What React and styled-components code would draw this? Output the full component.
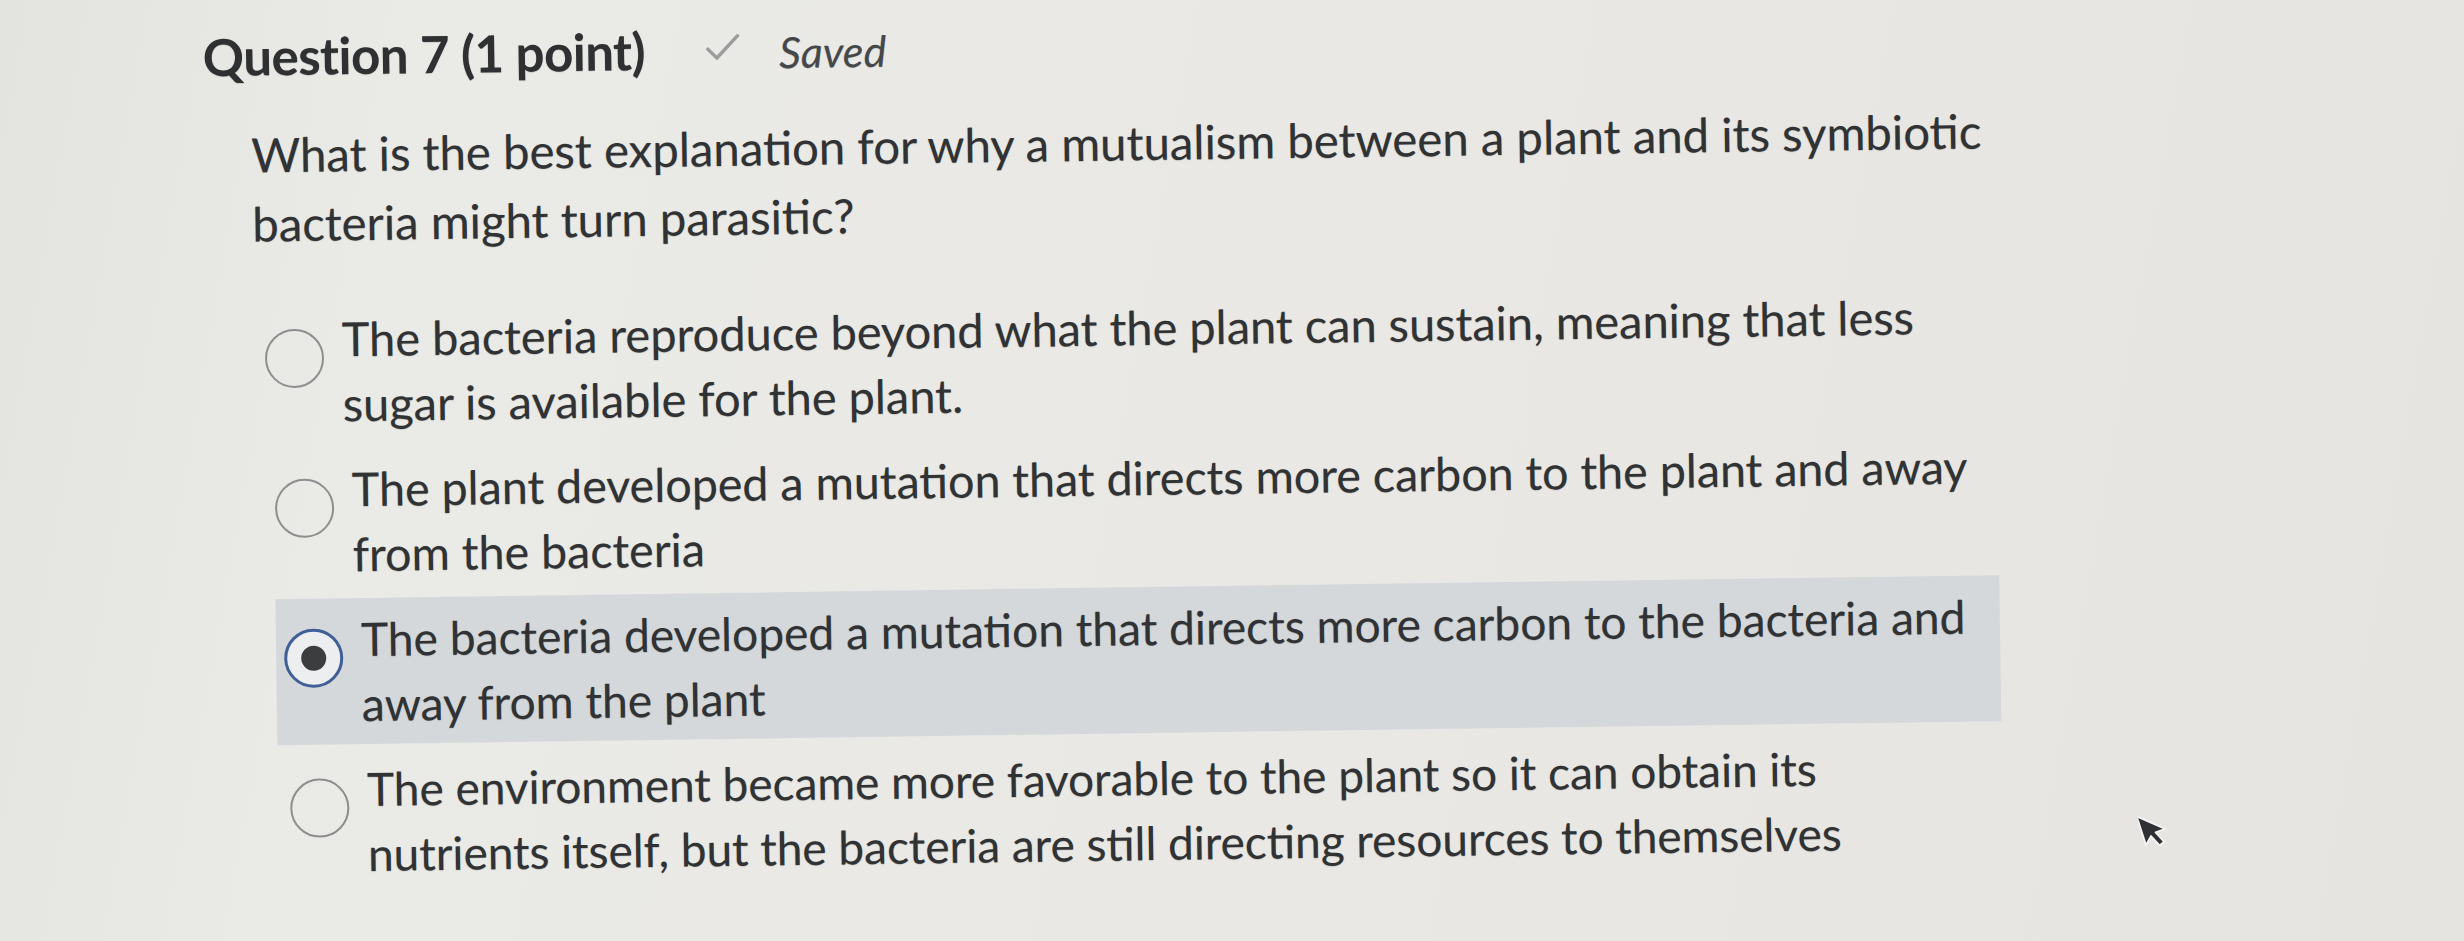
import React from "react";
import styled, { createGlobalStyle } from "styled-components";

const GlobalStyle = createGlobalStyle`
  html, body {
    margin: 0;
    padding: 0;
    background: #e6e5e1;
  }
  body {
    font-family: Lato, "Open Sans", "Liberation Sans", sans-serif;
    color: #313335;
  }
  * { box-sizing: border-box; }
`;

const Page = styled.main`
  position: relative;
  width: 2464px;
  height: 941px;
  overflow: hidden;
  background: linear-gradient(100deg, #e3e3e0 0%, #eaeae7 16%, #e9e8e4 55%, #e5e4e0 100%);
`;

const Sheet = styled.div`
  display: flex;
  flex-direction: column;
  padding: 29px 0 0 202px;
  transform: rotate(-0.8deg);
  transform-origin: 0 0;
`;

const Header = styled.header`
  display: flex;
  align-items: baseline;
`;

const Title = styled.h2`
  margin: 0;
  font-family: Lato, "Liberation Sans", sans-serif;
  font-weight: 700;
  font-size: 51px;
  line-height: 62px;
  color: #2f3032;
  letter-spacing: -0.5px;
  text-shadow: 0 0.5px 1px rgba(0, 0, 0, 0.25);
`;

const SavedStatus = styled.span`
  display: inline-flex;
  align-items: baseline;
  margin-left: 60px;
  gap: 38px;
  font-style: italic;
  font-size: 43px;
  line-height: 62px;
  color: #45484b;
  text-shadow: 0 0.5px 1px rgba(0, 0, 0, 0.2);
`;

const CheckMark = styled.svg`
  width: 36px;
  height: 30px;
  align-self: center;
  position: relative;
  top: -6px;
`;

const Prompt = styled.p`
  margin: 29px 0 0 47px;
  font-size: 47.3px;
  line-height: 69px;
  white-space: nowrap;
  color: #303234;
  text-shadow: 0 0.5px 1px rgba(0, 0, 0, 0.28);
`;

const OptionList = styled.div`
  display: flex;
  flex-direction: column;
  gap: 4px;
  margin: 42px 0 0 50px;
`;

const Row = styled.label`
  display: flex;
  align-items: flex-start;
  gap: 18px;
  width: 1724px;
  padding: 8px 8px;
  margin-left: ${(p) => p.$indent}px;
  background: ${(p) => (p.$selected ? "#d4d8db" : "transparent")};
  cursor: pointer;
`;

const Radio = styled.span`
  flex: none;
  display: flex;
  align-items: center;
  justify-content: center;
  width: 59px;
  height: 59px;
  margin-top: 22px;
  border-radius: 50%;
  border: ${(p) => (p.$checked ? "3px solid #3f5f96" : "2px solid #8d8e8f")};
  background: ${(p) => (p.$checked ? "#eceeef" : "transparent")};
`;

const Dot = styled.span`
  width: 25px;
  height: 25px;
  border-radius: 50%;
  background: #3b3d3f;
`;

const OptionText = styled.span`
  font-size: ${(p) => p.$size}px;
  line-height: 65px;
  white-space: nowrap;
  color: #303234;
  text-shadow: 0 0.5px 1px rgba(0, 0, 0, 0.28);
`;

const Cursor = styled.svg`
  position: absolute;
  left: 2138px;
  top: 808px;
  width: 36px;
  height: 44px;
`;

const options = [
  {
    lines: [
      "The bacteria reproduce beyond what the plant can sustain, meaning that less",
      "sugar is available for the plant.",
    ],
    indent: 0,
    size: 46.95,
  },
  {
    lines: [
      "The plant developed a mutation that directs more carbon to the plant and away",
      "from the bacteria",
    ],
    indent: 8,
    size: 46.6,
  },
  {
    lines: [
      "The bacteria developed a mutation that directs more carbon to the bacteria and",
      "away from the plant",
    ],
    indent: 15,
    size: 46.15,
    selected: true,
  },
  {
    lines: [
      "The environment became more favorable to the plant so it can obtain its",
      "nutrients itself, but the bacteria are still directing resources to themselves",
    ],
    indent: 19,
    size: 45.95,
  },
];

export default function App() {
  return (
    <>
      <GlobalStyle />
      <Page>
        <Sheet>
          <Header>
            <Title>Question 7 (1 point)</Title>
            <SavedStatus>
              <CheckMark viewBox="0 0 36 30" aria-hidden="true">
                <path
                  d="M3 17 L12 26 L33 4"
                  fill="none"
                  stroke="#9b9c9c"
                  strokeWidth="3.4"
                  strokeLinecap="round"
                  strokeLinejoin="round"
                />
              </CheckMark>
              Saved
            </SavedStatus>
          </Header>
          <Prompt>
            What is the best explanation for why a mutualism between a plant and its symbiotic
            <br />
            bacteria might turn parasitic?
          </Prompt>
          <OptionList role="radiogroup">
            {options.map((o, i) => (
              <Row key={i} $indent={o.indent} $selected={o.selected} role="radio" aria-checked={!!o.selected}>
                <Radio $checked={o.selected}>{o.selected && <Dot />}</Radio>
                <OptionText $size={o.size}>
                  {o.lines[0]}
                  <br />
                  {o.lines[1]}
                </OptionText>
              </Row>
            ))}
          </OptionList>
        </Sheet>
        <Cursor viewBox="0 0 20 24" aria-hidden="true">
          <path
            d="M2 2 L2 19 L6.2 15 L9.2 21.5 L12.2 20.2 L9.3 13.8 L15 13.6 Z"
            fill="#2e3033"
            stroke="#f4f4f2"
            strokeWidth="1.1"
            strokeLinejoin="round"
            transform="rotate(-18 8 12)"
          />
        </Cursor>
      </Page>
    </>
  );
}
